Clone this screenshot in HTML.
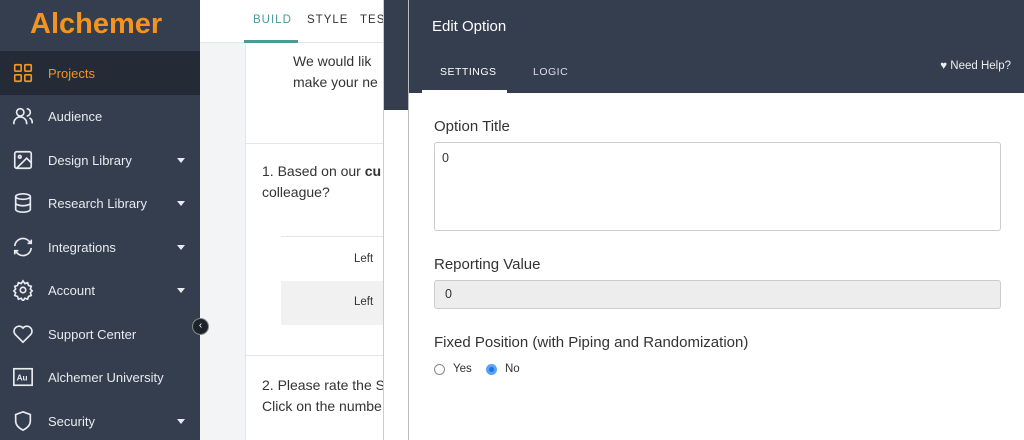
<!DOCTYPE html>
<html><head><meta charset="utf-8"><style>
*{box-sizing:border-box;margin:0;padding:0}
html,body{width:1024px;height:440px;overflow:hidden}
body{position:relative;font-family:"Liberation Sans",sans-serif;background:#f3f4f5}
.sb{position:absolute;left:0;top:0;width:200px;height:440px;background:#343e4e}
.logo{position:absolute;left:30px;top:8px;font-size:29px;font-weight:bold;color:#f5931f;letter-spacing:0px}
.it{position:absolute;left:0;width:200px;height:44px;display:flex;align-items:center;color:#e8ebef;font-size:13px}
.it svg{position:absolute;left:12px;width:22px;height:22px;fill:none;stroke:#e8ebef;stroke-width:1.8}
.it span{position:absolute;left:48px}
.it i{position:absolute;left:177px;top:20px;border:4px solid transparent;border-top:5px solid #e8ebef}
.act{background:#242b36;color:#f5931f}
.act svg{stroke:#f5931f}
.mid{position:absolute;left:200px;top:0;width:210px;height:440px}
.hdr{position:absolute;left:0;top:0;width:210px;height:43px;background:#fff;border-bottom:1px solid #e3e5e8}
.tab{position:absolute;top:14px;font-size:11.5px;letter-spacing:1px;color:#333}
.card{position:absolute;left:45px;top:43px;width:140px;height:397px;background:#fff;border-left:1px solid #e5e5e5}
.q{position:absolute;font-size:14px;color:#333;line-height:21px;white-space:nowrap}
.strip{position:absolute;left:383px;top:0;width:27px;height:440px;background:#fff;border-left:1px solid #ccc}
.modal{position:absolute;left:408px;top:0;width:616px;height:440px;background:#fff;border-left:1px solid #bbb}
.mh{position:absolute;left:0;top:0;width:616px;height:93px;background:#343e4e}
.lbl{position:absolute;left:25px;font-size:15px;color:#333}
.box{position:absolute;left:25px;width:567px;border:1px solid #ccc;border-radius:3px;font-size:12.5px;color:#333;padding:8px 7px}
</style></head><body>
<div class="sb">
<div class="logo">Alchemer</div>
<div class="it act" style="top:51px"><svg viewBox="0 0 24 24"><rect x="3" y="3" width="7" height="7" rx="1"/><rect x="14" y="3" width="7" height="7" rx="1"/><rect x="3" y="14" width="7" height="7" rx="1"/><rect x="14" y="14" width="7" height="7" rx="1"/></svg><span>Projects</span></div>
<div class="it" style="top:94px"><svg viewBox="0 0 24 24"><circle cx="9" cy="8" r="4"/><path d="M2 21v-1a7 7 0 0 1 14 0v1M16 4a4 4 0 0 1 0 8M19 14a6 6 0 0 1 3 6"/></svg><span>Audience</span></div>
<div class="it" style="top:138px"><svg viewBox="0 0 24 24"><rect x="3" y="3" width="18" height="18" rx="2"/><circle cx="8.5" cy="8.5" r="1.5"/><path d="M21 15l-5-5L5 21"/></svg><span>Design Library</span><i></i></div>
<div class="it" style="top:181px"><svg viewBox="0 0 24 24"><ellipse cx="12" cy="5" rx="8" ry="3"/><path d="M4 5v14c0 1.7 3.6 3 8 3s8-1.3 8-3V5M4 12c0 1.7 3.6 3 8 3s8-1.3 8-3"/></svg><span>Research Library</span><i></i></div>
<div class="it" style="top:225px"><svg viewBox="0 0 24 24"><path d="M3 11a9 9 0 0 1 16-5l2 2M21 4v4h-4M21 13a9 9 0 0 1-16 5l-2-2M3 20v-4h4"/></svg><span>Integrations</span><i></i></div>
<div class="it" style="top:268px"><svg viewBox="0 0 24 24"><circle cx="12" cy="12" r="3"/><path d="M12 2l2 3 3-1 1 3 3 1-1 3 2 2-2 2 1 3-3 1-1 3-3-1-2 3-2-3-3 1-1-3-3-1 1-3-2-2 2-2-1-3 3-1 1-3 3 1z"/></svg><span>Account</span><i></i></div>
<div class="it" style="top:312px"><svg viewBox="0 0 24 24"><path d="M12 21l-8.5-8.5a5 5 0 0 1 8.5-7a5 5 0 0 1 8.5 7z"/></svg><span>Support Center</span></div>
<div class="it" style="top:355px"><svg viewBox="0 0 24 24"><rect x="2" y="3" width="20" height="18"/><text x="5" y="16" font-size="9" fill="#e8ebef" stroke="none" font-family="Liberation Sans" font-weight="bold">Au</text></svg><span>Alchemer University</span></div>
<div class="it" style="top:399px"><svg viewBox="0 0 24 24"><path d="M12 2l8 3v7c0 5-4 8-8 10c-4-2-8-5-8-10V5z"/></svg><span>Security</span><i></i></div>
</div>
<div class="mid">
<div class="hdr"><div class="tab" style="left:53px;color:#4a9a98">BUILD</div><div class="tab" style="left:107px">STYLE</div><div class="tab" style="left:160px">TEST</div><div style="position:absolute;left:44px;top:40px;width:54px;height:3px;background:#4a9a98"></div></div>
<div class="card">
<div class="q" style="left:47px;top:8px">We would lik<br>make your ne</div>
<div style="position:absolute;left:0;top:100px;width:140px;border-top:1px solid #e5e5e5"></div>
<div class="q" style="left:16px;top:118px">1. Based on our <b>cu</b><br>colleague?</div>
<div style="position:absolute;left:35px;top:193px;width:105px;border-top:1px solid #e5e5e5"></div>
<div style="position:absolute;left:35px;top:238px;width:105px;height:44px;background:#f1f1f1"></div>
<div class="q" style="left:108px;top:206px;font-size:11.5px">Left</div>
<div class="q" style="left:108px;top:249px;font-size:11.5px">Left</div>
<div style="position:absolute;left:0;top:312px;width:140px;border-top:1px solid #e5e5e5"></div>
<div class="q" style="left:16px;top:332px">2. Please rate the S<br>Click on the numbe</div>
</div>
<div style="position:absolute;left:-8px;top:318px;width:17px;height:17px;border-radius:50%;background:#1e232b;border:1px solid #888;color:#fff;font-size:10px;text-align:center;line-height:14px">‹</div>
</div>
<div class="strip"><div style="position:absolute;left:0;top:0;width:27px;height:110px;background:#343e4e"></div></div>
<div class="modal">
<div class="mh">
<div style="position:absolute;left:23px;top:18px;color:#fff;font-size:15px">Edit Option</div>
<div style="position:absolute;left:31px;top:66px;color:#fff;font-size:10.5px;letter-spacing:.5px">SETTINGS</div>
<div style="position:absolute;left:124px;top:66px;color:#dde;font-size:10.5px;letter-spacing:.5px">LOGIC</div>
<div style="position:absolute;left:13px;top:90px;width:85px;height:3px;background:#fff"></div>
<div style="position:absolute;right:14px;top:60px;color:#eee;font-size:11.5px">♥ Need Help?</div>
</div>
<div class="lbl" style="top:118px">Option Title</div>
<div class="box" style="top:142px;height:89px">0</div>
<div class="lbl" style="top:256px">Reporting Value</div>
<div class="box" style="top:280px;height:29px;background:#ededed;padding:6px 10px">0</div>
<div class="lbl" style="top:334px">Fixed Position (with Piping and Randomization)</div>
<div style="position:absolute;left:25px;top:364px;width:11px;height:11px;border-radius:50%;border:1px solid #888"></div>
<div style="position:absolute;left:44px;top:363px;font-size:11.5px;color:#333">Yes</div>
<div style="position:absolute;left:77px;top:364px;width:11px;height:11px;border-radius:50%;border:3px solid #5da0f5;background:#1a73e8"></div>
<div style="position:absolute;left:96px;top:363px;font-size:11.5px;color:#333">No</div>
</div>
</body></html>
